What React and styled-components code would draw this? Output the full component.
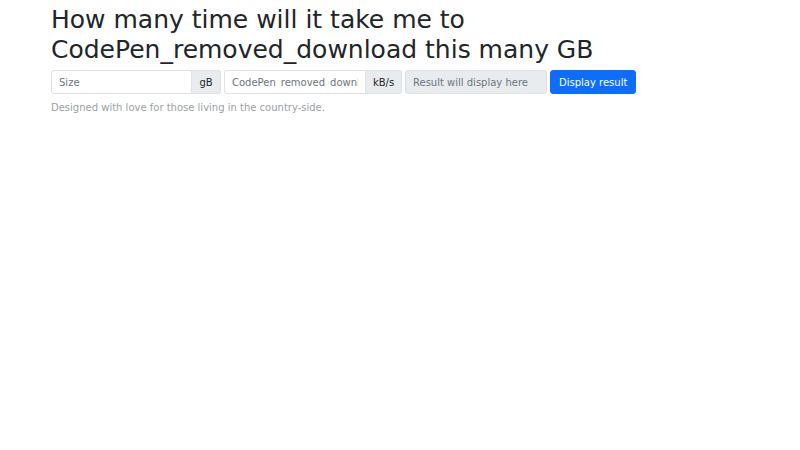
import React from "react";
import styled, { createGlobalStyle } from "styled-components";

const Global = createGlobalStyle`
  html, body { margin: 0; padding: 0; background: #fff; }
  body { font-family: "DejaVu Sans", sans-serif; color: #212529; }
  * { box-sizing: border-box; }
`;

const Container = styled.div`
  padding: 5px 51px;
`;

const Title = styled.h3`
  margin: 0 0 5px;
  font-weight: 400;
  font-size: 25px;
  line-height: 1.2;
  color: #212529;
`;

const Row = styled.div`
  display: flex;
  gap: 3px;
  align-items: stretch;
`;

const Group = styled.div`
  display: flex;
  flex: none;
`;

const Input = styled.input`
  flex: none;
  width: ${(p) => p.$w}px;
  height: 24px;
  padding: 0 7px;
  font-family: "DejaVu Sans", sans-serif;
  font-size: 10px;
  line-height: 22px;
  color: #212529;
  background: ${(p) => (p.disabled ? "#e9ecef" : "#fff")};
  border: 1px solid #dee2e6;
  border-radius: ${(p) => (p.$alone ? "3px" : "3px 0 0 3px")};
  outline: none;
  &::placeholder { color: #6c757d; opacity: 1; line-height: 22px; }
`;

const Addon = styled.span`
  display: flex;
  align-items: center;
  justify-content: center;
  width: ${(p) => p.$w}px;
  height: 24px;
  font-size: 10px;
  background: #e9ecef;
  border: 1px solid #dee2e6;
  border-left: none;
  border-radius: 0 3px 3px 0;
  color: #212529;
`;

const Button = styled.button`
  flex: none;
  height: 24px;
  padding: 0 8px;
  font: 10px "DejaVu Sans", sans-serif;
  color: #fff;
  background: #0d6efd;
  border: 1px solid #0d6efd;
  border-radius: 3px;
`;

const Note = styled.p`
  margin: 6px 0 0;
  font-size: 10px;
  line-height: 1.5;
  color: #9a9fa4;
`;

export default function App() {
  return (
    <>
      <Global />
      <Container>
        <Title>
          How many time will it take me to
          <br />
          CodePen_removed_download this many GB
        </Title>
        <Row>
          <Group>
            <Input $w={141} placeholder="Size" />
            <Addon $w={29}>gB</Addon>
          </Group>
          <Group>
            <Input $w={142} placeholder="CodePen_removed_download speed" />
            <Addon $w={36}>kB/s</Addon>
          </Group>
          <Input $alone $w={142} disabled placeholder="Result will display here" />
          <Button>Display result</Button>
        </Row>
        <Note>Designed with love for those living in the country-side.</Note>
      </Container>
    </>
  );
}
